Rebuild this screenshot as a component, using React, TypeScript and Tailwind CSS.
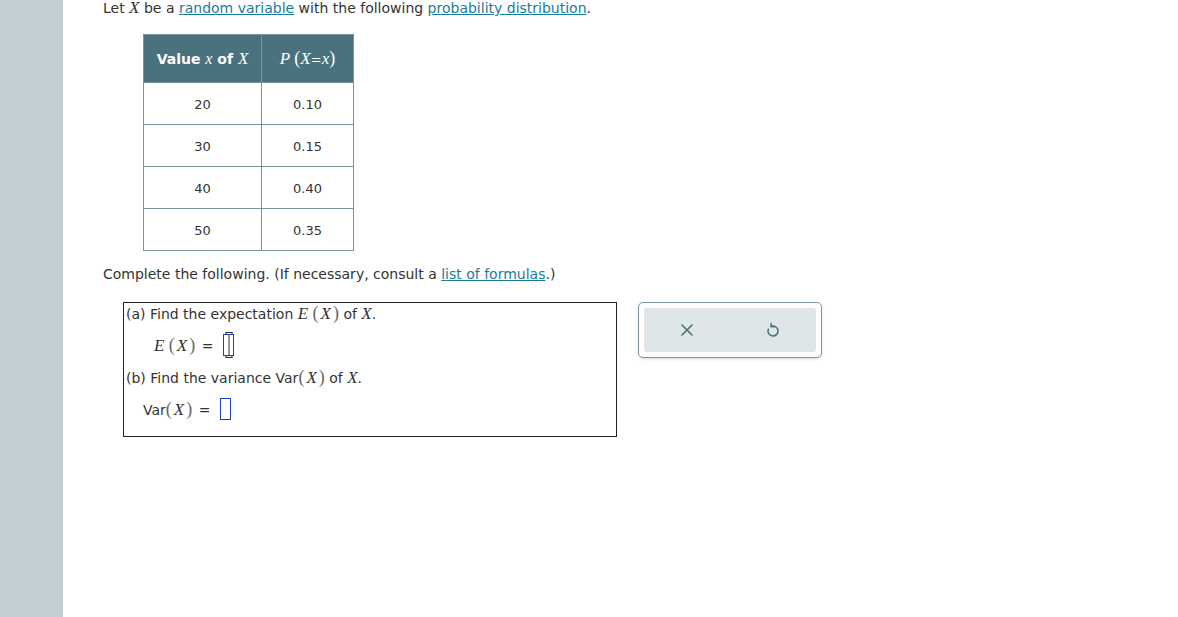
const M = ({ children, size = 'text-[17px]' }: { children: React.ReactNode; size?: string }) => (
  <span className={`italic ${size}`} style={{ fontFamily: '"Liberation Serif", serif' }}>{children}</span>
)

const P = ({ children }: { children: React.ReactNode }) => (
  <span className="text-[18px] text-[#666]" style={{ fontFamily: '"Liberation Serif", serif' }}>{children}</span>
)

const rows = [
  ['20', '0.10'],
  ['30', '0.15'],
  ['40', '0.40'],
  ['50', '0.35'],
]

function AnswerBox({ active }: { active?: boolean }) {
  return (
    <span className="relative inline-block w-[11px] h-[22px] border border-[#1f3fd0] align-middle">
      {active && (
        <>
          <span className="absolute left-1/2 top-[-3px] -translate-x-1/2 w-[7px] h-[3px] border-x border-t border-[#333]" />
          <span className="absolute left-1/2 top-0 bottom-0 -translate-x-1/2 w-px bg-[#333]" />
          <span className="absolute left-1/2 bottom-[-3px] -translate-x-1/2 w-[7px] h-[3px] border-x border-b border-[#333]" />
        </>
      )}
    </span>
  )
}

export default function App() {
  return (
    <div className="flex min-h-[617px] bg-white text-[14px] text-[#333]" style={{ fontFamily: '"DejaVu Sans", Verdana, sans-serif' }}>
      <div className="w-[63px] shrink-0 bg-[#c3cfd5]" />
      <div className="pl-[40px]">
        <p className="leading-[16px]">
          Let <M>X</M> be a <a className="text-[#1a7c98] underline">random variable</a> with the following{' '}
          <a className="text-[#1a7c98] underline">probability distribution</a>.
        </p>

        <table className="ml-[40px] mt-[18px] border-collapse text-[13px]">
          <thead>
            <tr className="h-[48px] bg-[#4a717e] text-white">
              <th className="w-[118px] border border-[#7a949b] font-bold text-[14px]">
                Value <M size="text-[16px] font-normal">x</M> of <M size="text-[17px] font-normal">X</M>
              </th>
              <th className="w-[92px] border border-[#7a949b] font-normal">
                <M>P</M> <span className="text-[18px]" style={{ fontFamily: '"Liberation Serif", serif' }}>(</span><M>X</M>=<M>x</M><span className="text-[18px]" style={{ fontFamily: '"Liberation Serif", serif' }}>)</span>
              </th>
            </tr>
          </thead>
          <tbody>
            {rows.map(([a, b]) => (
              <tr key={a} className="h-[42px]">
                <td className="border border-[#7a949b] pt-[2px] text-center">{a}</td>
                <td className="border border-[#7a949b] pt-[2px] text-center">{b}</td>
              </tr>
            ))}
          </tbody>
        </table>

        <p className="mt-[15px] leading-[16px]">
          Complete the following. (If necessary, consult a <a className="text-[#1a7c98] underline">list of formulas</a>.)
        </p>

        <div className="mt-[20px] ml-[20px] flex items-start gap-[21px]">
          <div className="w-[494px] h-[135px] border border-[#222] px-[2px] pt-[1px] leading-[18px]">
            <p>
              (a) Find the expectation <M>E</M> <P>(</P><span className="px-[2px]"><M>X</M></span><P>)</P> of <M>X</M>.
            </p>
            <p className="mt-[11px] pl-[28px] flex items-center gap-[10px]">
              <span><M>E</M> <P>(</P><span className="px-[2px]"><M>X</M></span><P>)</P> <span className="ml-[2px]">=</span></span>
              <AnswerBox active />
            </p>
            <p className="mt-[12px]">
              (b) Find the variance Var<P>(</P><span className="px-[2px]"><M>X</M></span><P>)</P> of <M>X</M>.
            </p>
            <p className="mt-[11px] pl-[17px] flex items-center gap-[10px]">
              <span>Var<P>(</P><span className="px-[2px]"><M>X</M></span><P>)</P> <span className="ml-[2px]">=</span></span>
              <AnswerBox />
            </p>
          </div>

          <div className="w-[184px] h-[56px] rounded-[5px] border border-[#7b9aa3] bg-white p-[5px] shadow-[0_1px_3px_rgba(0,0,0,0.15)]">
            <div className="flex h-full items-center rounded-[3px] bg-[#dfe6e8] text-[#4a6f7c]">
              <div className="flex w-1/2 justify-center">
                <svg width="14" height="14" viewBox="0 0 14 14" fill="none" stroke="currentColor" strokeWidth="1.6" strokeLinecap="round">
                  <path d="M2 2 L12 12 M12 2 L2 12" />
                </svg>
              </div>
              <div className="flex w-1/2 justify-center">
                <svg width="16" height="18" viewBox="0 0 16 18" fill="none" stroke="currentColor" strokeWidth="1.5" strokeLinecap="round" strokeLinejoin="round">
                  <path d="M6 5.4 A5 5 0 1 1 3.3 8.3" />
                  <path d="M6.2 2.6 L6 5.4 L9 5.8" />
                </svg>
              </div>
            </div>
          </div>
        </div>
      </div>
    </div>
  )
}
